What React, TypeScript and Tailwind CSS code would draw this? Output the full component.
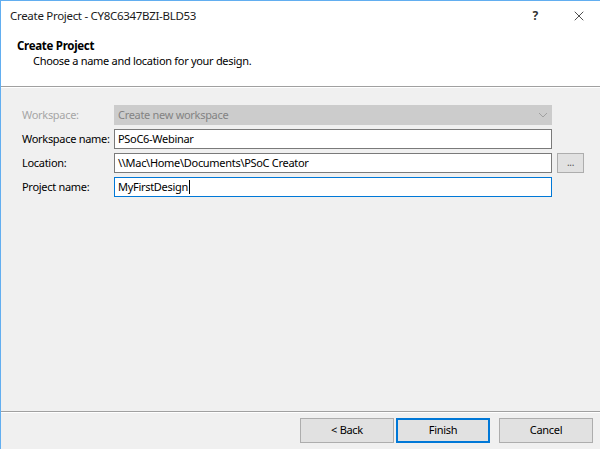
import { X } from "lucide-react";

const fields = [
  { label: "Workspace name:", value: "PSoC6-Webinar" },
  { label: "Location:", value: "\\\\Mac\\Home\\Documents\\PSoC Creator", browse: true },
];

export default function App() {
  return (
    <div
      className="w-[600px] h-[449px] flex flex-col border-t border-l border-[#62aef0] bg-white text-[11px] tracking-[-0.3px] text-black overflow-hidden whitespace-nowrap"
      style={{ fontFamily: '"Noto Sans", "Liberation Sans", sans-serif' }}
    >
      {/* Title bar */}
      <div className="h-[30px] flex items-center pl-[9px] bg-white shrink-0">
        <span className="text-[#1a1a1a] text-[11.5px]">Create Project - CY8C6347BZI-BLD53</span>
        <span className="ml-auto mr-[33px] text-[12px] font-bold text-[#333]">?</span>
        <X className="w-[16px] h-[16px] mr-[13px] text-[#222]" strokeWidth={1.2} />
      </div>

      {/* Header */}
      <div className="h-[55px] bg-white pl-[16px] pt-[7px] shrink-0">
        <div className="font-bold leading-[15px] text-[11.5px]">Create Project</div>
        <div className="pl-[16px] leading-[15px]">Choose a name and location for your design.</div>
      </div>
      <div className="border-t border-[#a0a0a0] border-b border-b-white shrink-0" />

      {/* Body */}
      <div className="flex-1 bg-[#f0f0f0] pt-[17px] pl-[21px]">
        <div className="grid grid-cols-[92px_438px_auto] gap-y-[4px] items-center">
          <div className="text-[#a6a6a6]">Workspace:</div>
          <div className="h-[20px] bg-[#cccccc] border border-[#cccccc] flex items-center pl-[3px] text-[#838383]">
            <span>Create new workspace</span>
            <svg className="ml-auto mr-[3px]" width="10" height="6" viewBox="0 0 10 6">
              <path d="M1 1l4 4 4-4" fill="none" stroke="#a0a0a0" strokeWidth="1" />
            </svg>
          </div>
          <div />
          {fields.map((f) => (
            <>
              <div key={f.label + "l"}>{f.label}</div>
              <div key={f.label + "i"} className="h-[20px] bg-white border border-[#7a7a7a] flex items-center pl-[3px]">
                {f.value}
              </div>
              {f.browse ? (
                <div key={f.label + "b"} className="ml-[5px] w-[27px] h-[20px] bg-[#e1e1e1] border border-[#adadad] flex items-center justify-center text-[10px] text-[#555] leading-none pb-[2px]">
                  ...
                </div>
              ) : (
                <div key={f.label + "b"} />
              )}
            </>
          ))}
          <div>Project name:</div>
          <div className="h-[20px] bg-white border border-[#0078d7] flex items-center pl-[3px]">
            MyFirstDesign<span className="w-px h-[14px] bg-black ml-px" />
          </div>
          <div />
        </div>
      </div>

      {/* Footer */}
      <div className="border-t border-[#a0a0a0] border-b border-b-white shrink-0" />
      <div className="h-[36px] bg-[#f0f0f0] flex items-start pt-[5px] pl-[299px] shrink-0">
        <button className="w-[94px] h-[25px] bg-[#e1e1e1] border border-[#adadad]">&lt; Back</button>
        <button className="ml-[2px] w-[94px] h-[25px] bg-[#e1e1e1] border-2 border-[#0078d7]">Finish</button>
        <button className="ml-[9px] w-[94px] h-[25px] bg-[#e1e1e1] border border-[#adadad]">Cancel</button>
      </div>
    </div>
  );
}
